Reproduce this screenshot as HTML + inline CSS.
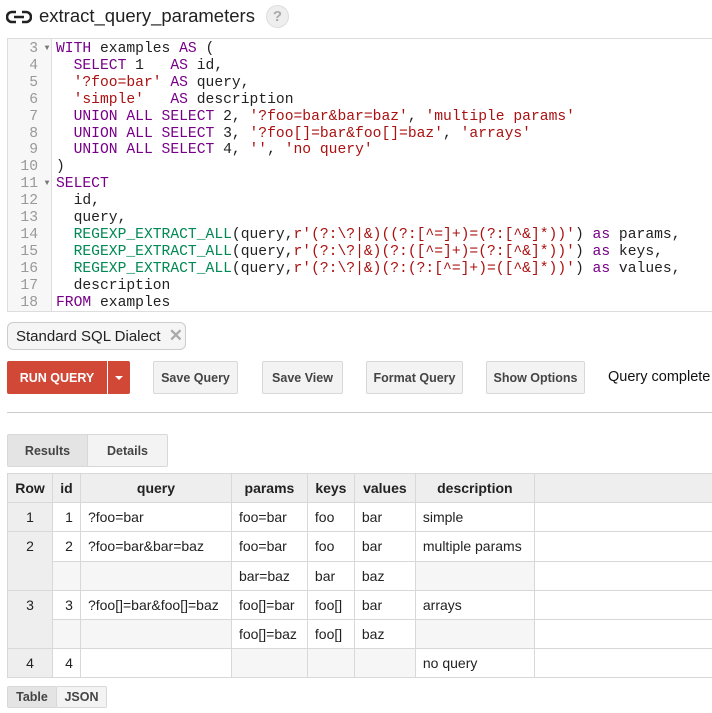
<!DOCTYPE html>
<html><head><meta charset="utf-8"><style>
*{box-sizing:border-box;margin:0;padding:0}
body{width:712px;height:713px;overflow:hidden;background:#fff;font-family:"Liberation Sans",Arial,sans-serif;position:relative;color:#222}
.abs{position:absolute}
.title{left:39px;top:5px;font-size:18.5px;color:#222;white-space:nowrap}
.help{left:266px;top:5px;width:23px;height:23px;border-radius:50%;background:#eee;border:1px solid #ddd;color:#aaa;font-size:15px;font-weight:bold;text-align:center;line-height:21px}
.editor{left:7px;top:38px;width:720px;height:274px;border:1px solid #ddd;border-right:none;overflow:hidden}
.gut{position:absolute;left:0;top:0;width:44px;height:100%;background:#f7f7f7;border-right:1px solid #ddd}
.code{position:absolute;left:0;top:2px;font-family:"Liberation Mono","Courier New",monospace;font-size:14.67px;line-height:16.9px;white-space:pre}
.ln{display:inline-block;width:30px;text-align:right;color:#999}
.fold{display:inline-block;width:18px;color:#777;font-size:8px;text-align:center;vertical-align:top}
.k{color:#708}.s{color:#a11}.f{color:#085}
.chip{left:7px;top:322px;width:179px;height:28px;border:1px solid #ccc;border-radius:6px;background:#f5f5f5;font-size:15px;line-height:26px;padding-left:8px;white-space:nowrap}
.btn{position:absolute;top:361px;height:33px;border:1px solid #d8d8d8;border-radius:2px;background:#f3f3f3;font-size:12.5px;font-weight:bold;color:#444;text-align:center;line-height:32px;white-space:nowrap}
.run{left:7px;top:361px;width:100px;height:33px;background:#d14836;color:#fff;font-size:12.5px;font-weight:bold;text-align:center;line-height:34px;border-radius:2px 0 0 2px}
.dd{left:108px;top:361px;width:22px;height:33px;background:#d14836;border-radius:0 2px 2px 0}
.hr{left:7px;top:412px;width:705px;height:1px;background:#ccc}
table{position:absolute;left:7px;top:473px;border-collapse:collapse;font-size:14px}
td,th{border:1px solid #d8d8d8;height:29.2px;padding:0 7px;white-space:nowrap}
th{background:#eee;font-weight:bold;text-align:center}
td.r{background:#eee;text-align:center}
td.g{background:#f6f6f6}
</style></head><body>
<svg class="abs" style="left:6px;top:9px" width="26" height="16" viewBox="0 0 26 16"><path d="M10 3H6a5 5 0 0 0 0 10h4M16 3h4a5 5 0 0 1 0 10h-4M8 8h10" fill="none" stroke="#222" stroke-width="2.6"/></svg>
<div class="abs title">extract_query_parameters</div>
<div class="abs help">?</div>
<div class="abs editor"><div class="gut"></div><div class="code"><span class="ln">3</span><span class="fold">▼</span><span class="k">WITH</span> examples <span class="k">AS</span> (
<span class="ln">4</span><span class="fold"></span>  <span class="k">SELECT</span> 1   <span class="k">AS</span> id,
<span class="ln">5</span><span class="fold"></span>  <span class="s">'?foo=bar'</span> <span class="k">AS</span> query,
<span class="ln">6</span><span class="fold"></span>  <span class="s">'simple'</span>   <span class="k">AS</span> description
<span class="ln">7</span><span class="fold"></span>  <span class="k">UNION ALL SELECT</span> 2, <span class="s">'?foo=bar&amp;bar=baz'</span>, <span class="s">'multiple params'</span>
<span class="ln">8</span><span class="fold"></span>  <span class="k">UNION ALL SELECT</span> 3, <span class="s">'?foo[]=bar&amp;foo[]=baz'</span>, <span class="s">'arrays'</span>
<span class="ln">9</span><span class="fold"></span>  <span class="k">UNION ALL SELECT</span> 4, <span class="s">''</span>, <span class="s">'no query'</span>
<span class="ln">10</span><span class="fold"></span>)
<span class="ln">11</span><span class="fold">▼</span><span class="k">SELECT</span>
<span class="ln">12</span><span class="fold"></span>  id,
<span class="ln">13</span><span class="fold"></span>  query,
<span class="ln">14</span><span class="fold"></span>  <span class="f">REGEXP_EXTRACT_ALL</span>(query,<span class="s">r'(?:\?|&amp;)((?:[^=]+)=(?:[^&amp;]*))'</span>) <span class="k">as</span> params,
<span class="ln">15</span><span class="fold"></span>  <span class="f">REGEXP_EXTRACT_ALL</span>(query,<span class="s">r'(?:\?|&amp;)(?:([^=]+)=(?:[^&amp;]*))'</span>) <span class="k">as</span> keys,
<span class="ln">16</span><span class="fold"></span>  <span class="f">REGEXP_EXTRACT_ALL</span>(query,<span class="s">r'(?:\?|&amp;)(?:(?:[^=]+)=([^&amp;]*))'</span>) <span class="k">as</span> values,
<span class="ln">17</span><span class="fold"></span>  description
<span class="ln">18</span><span class="fold"></span><span class="k">FROM</span> examples</div></div>
<div class="abs chip">Standard SQL Dialect <span style="color:#aaa;font-weight:bold;font-size:17px;margin-left:4px">✕</span></div>
<div class="abs run">RUN QUERY</div>
<div class="abs dd"><div style="position:absolute;left:7px;top:15px;border-left:4px solid transparent;border-right:4px solid transparent;border-top:4px solid #fff"></div></div>
<div class="btn" style="left:153px;width:85px">Save Query</div>
<div class="btn" style="left:262px;width:81px">Save View</div>
<div class="btn" style="left:366px;width:97px">Format Query</div>
<div class="btn" style="left:486px;width:99px">Show Options</div>
<div class="abs" style="left:608px;top:369px;font-size:14.5px;color:#111;white-space:nowrap">Query complete</div>
<div class="abs hr"></div>
<div class="btn" style="left:7px;top:434px;width:81px;height:33px;background:#e4e4e4;border-radius:2px 0 0 2px;line-height:32px">Results</div>
<div class="btn" style="left:87px;top:434px;width:81px;height:33px;background:#f3f3f3;line-height:32px">Details</div>
<table>
<tr><th style="width:45px">Row</th><th style="width:28px">id</th><th style="width:151px">query</th><th style="width:76px">params</th><th style="width:47px">keys</th><th style="width:61px">values</th><th style="width:119px">description</th><th style="width:178px;border-right:none"></th></tr>
<tr><td class="r">1</td><td style="text-align:right">1</td><td>?foo=bar</td><td>foo=bar</td><td>foo</td><td>bar</td><td>simple</td><td style="border-right:none"></td></tr>
<tr><td class="r" rowspan="2" style="vertical-align:top;padding-top:6px">2</td><td style="text-align:right">2</td><td>?foo=bar&amp;bar=baz</td><td>foo=bar</td><td>foo</td><td>bar</td><td>multiple params</td><td style="border-right:none"></td></tr>
<tr><td class="g"></td><td class="g"></td><td>bar=baz</td><td>bar</td><td>baz</td><td class="g"></td><td style="border-right:none"></td></tr>
<tr><td class="r" rowspan="2" style="vertical-align:top;padding-top:6px">3</td><td style="text-align:right">3</td><td style="padding:0 4px 0 7px">?foo[]=bar&amp;foo[]=baz</td><td style="padding:0 4px 0 7px">foo[]=bar</td><td>foo[]</td><td>bar</td><td>arrays</td><td style="border-right:none"></td></tr>
<tr><td class="g"></td><td class="g"></td><td style="padding:0 4px 0 7px">foo[]=baz</td><td>foo[]</td><td>baz</td><td class="g"></td><td style="border-right:none"></td></tr>
<tr><td class="r">4</td><td style="text-align:right">4</td><td></td><td class="g"></td><td class="g"></td><td class="g"></td><td>no query</td><td style="border-right:none"></td></tr>
</table>
<div class="btn" style="left:7px;top:686px;width:50px;height:22px;line-height:21px;background:#e4e4e4">Table</div>
<div class="btn" style="left:56px;top:686px;width:51px;height:22px;line-height:21px">JSON</div>
</body></html>
